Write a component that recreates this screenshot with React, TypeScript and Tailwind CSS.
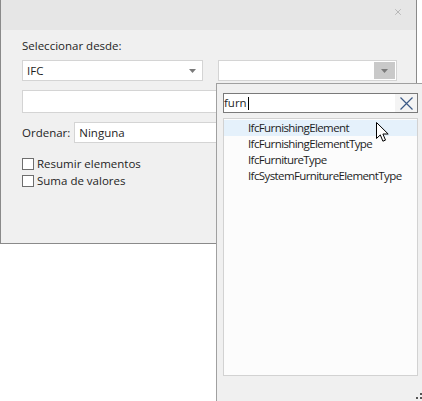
import { X } from 'lucide-react'

const items = [
  'IfcFurnishingElement',
  'IfcFurnishingElementType',
  'IfcFurnitureType',
  'IfcSystemFurnitureElementType',
]

function Caret({ className = '' }: { className?: string }) {
  return (
    <svg width="7" height="4" viewBox="0 0 7 4" className={className}>
      <path d="M0 0h7L3.5 4z" fill="#7a7a7a" />
    </svg>
  )
}

function Checkbox({ label }: { label: string }) {
  return (
    <label className="flex items-center gap-[3px] h-[17px]">
      <span className="w-[12px] h-[12px] border border-[#6e6e6e] bg-white" />
      <span>{label}</span>
    </label>
  )
}

export default function App() {
  return (
    <div
      className="relative w-[422px] h-[401px] bg-white overflow-hidden text-[11.5px] text-[#1e1e1e]"
      style={{ fontFamily: '"Open Sans", "Noto Sans", sans-serif' }}
    >
      {/* dialog */}
      <div className="w-[417px] h-[244px] border border-t-0 border-[#8a8a8a] bg-[#f0f0f0] flex flex-col">
        <div className="h-[30px] bg-[#e6e6e6] flex items-start justify-end pr-[13px] pt-[7px]">
          <X size={10} strokeWidth={2.2} className="text-[#b4b4b4]" />
        </div>
        <div className="pl-[21px] pt-[8px] flex flex-col">
          <div className="h-[16px] leading-[16px]">Seleccionar desde:</div>
          <div className="flex gap-[15px] mt-[6px]">
            <div className="w-[181px] h-[21px] border border-[#d4d4d4] bg-white flex items-center justify-between pl-[4px] pr-[6px]">
              <span>IFC</span>
              <Caret />
            </div>
            <div className="w-[179px] h-[21px] border border-[#d4d4d4] bg-white flex items-stretch justify-end p-[1px]">
              <div className="w-[21px] bg-[#c9c9c9] flex items-center justify-center">
                <Caret />
              </div>
            </div>
          </div>
          <div className="mt-[9px] w-[375px] h-[23px] border border-[#d4d4d4] bg-white" />
          <div className="flex items-center mt-[9px] gap-[4px]">
            <span>Ordenar:</span>
            <div className="w-[300px] h-[21px] border border-[#d4d4d4] bg-white flex items-center pl-[4px]">Ninguna</div>
          </div>
          <div className="flex flex-col mt-[12px]">
            <Checkbox label="Resumir elementos" />
            <Checkbox label="Suma de valores" />
          </div>
        </div>
      </div>

      {/* dropdown popup */}
      <div className="absolute left-[216px] top-[83px] w-[210px] h-[320px] border border-[#a0a0a0] bg-[#f0f0f0] pl-[6px] pt-[9px]">
        <div className="w-[195px] h-[20px] border border-[#7a7a7a] bg-white flex items-stretch justify-between">
          <span className="flex items-center leading-none">
            furn<span className="w-px h-[13px] bg-black ml-px" />
          </span>
          <span className="w-[22px] bg-[#f4f4f4] flex items-center justify-center">
            <svg width="13" height="13" viewBox="0 0 13 13">
              <path d="M0.5 0.5l12 12M12.5 0.5l-12 12" stroke="#3c5a86" strokeWidth="1.2" />
            </svg>
          </span>
        </div>
        <div className="mt-[5px] w-[195px] h-[258px] border border-[#d2d2d2] bg-[#fcfcfc] pt-[1px]">
          {items.map((it, i) => (
            <div
              key={it}
              className={`h-[16px] leading-[16px] pl-[24px] tracking-[-0.6px] ${i === 0 ? 'bg-[#e5f1fb]' : ''}`}
            >
              {it}
            </div>
          ))}
        </div>
        {/* resize grip */}
        <div className="absolute right-[3px] bottom-[3px] w-[6px] h-[6px]">
          <span className="absolute right-0 top-0 w-[2px] h-[2px] bg-[#555]" />
          <span className="absolute right-0 bottom-0 w-[2px] h-[2px] bg-[#555]" />
          <span className="absolute left-0 bottom-0 w-[2px] h-[2px] bg-[#555]" />
        </div>
      </div>

      {/* mouse pointer */}
      <svg className="absolute left-[376px] top-[122px]" width="13" height="21" viewBox="0 0 13 21">
        <path
          d="M0.5 0.5v16l3.8-3.6 2.6 6.3 2.6-1.1-2.6-6.1h5.3z"
          fill="#fff"
          stroke="#000"
          strokeWidth="1"
          strokeLinejoin="miter"
        />
      </svg>
    </div>
  )
}
